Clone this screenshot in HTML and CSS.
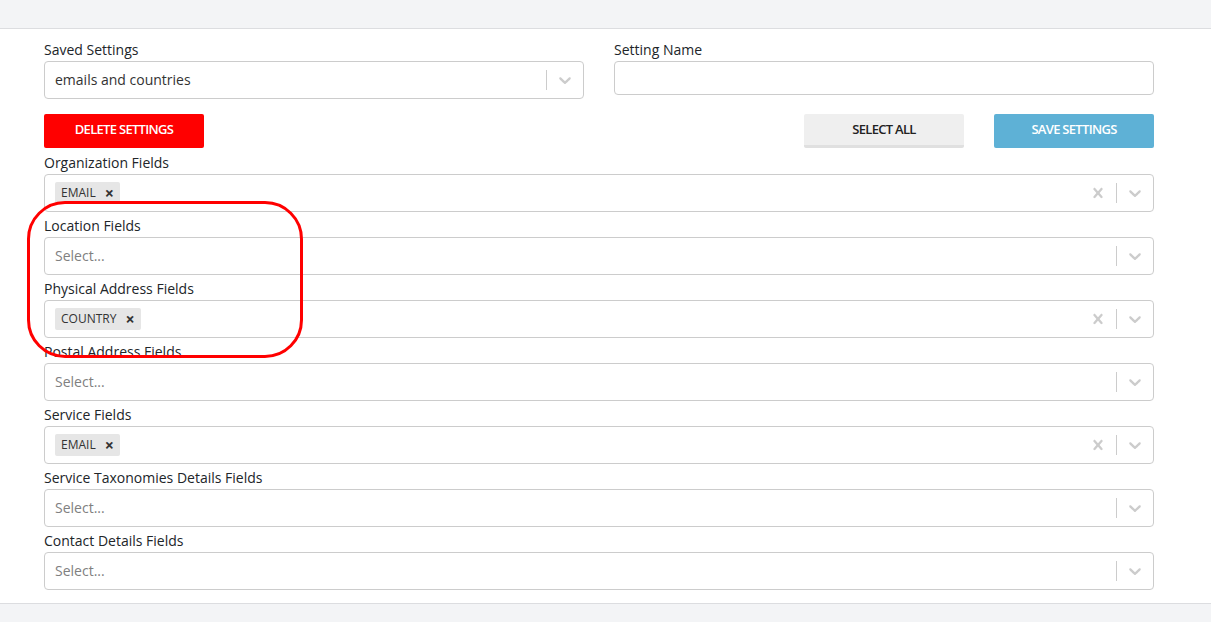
FILE: index.html
```html
<!DOCTYPE html>
<html>
<head>
<meta charset="utf-8">
<link rel="stylesheet" href="styles.css">
</head>
<body>
<div class="topbar"></div>
<main class="panel">
  <div class="row2">
    <div class="field">
      <label class="lbl">Saved Settings</label>
      <div class="select">
        <div class="values"><span class="single">emails and countries</span></div>
        <div class="indicators">
          <span class="sep"></span>
          <span class="ind"><svg viewBox="0 0 20 20" width="20" height="20"><path d="M4.516 7.548c0.436-0.446 1.043-0.481 1.576 0l3.908 3.747 3.908-3.747c0.533-0.481 1.141-0.446 1.574 0 0.436 0.445 0.408 1.197 0 1.615-0.406 0.418-4.695 4.502-4.695 4.502-0.217 0.223-0.502 0.335-0.787 0.335s-0.57-0.112-0.789-0.335c0 0-4.287-4.084-4.695-4.502s-0.436-1.17 0-1.615z"/></svg></span>
        </div>
      </div>
    </div>
    <div class="field">
      <label class="lbl">Setting Name</label>
      <input class="text-input" type="text">
    </div>
  </div>

  <div class="btn-row">
    <button class="btn btn-delete">DELETE SETTINGS</button>
    <div class="btn-right">
      <button class="btn btn-select">SELECT ALL</button>
      <button class="btn btn-save">SAVE SETTINGS</button>
    </div>
  </div>

  <div class="fields">
    <div class="field">
      <label class="lbl">Organization Fields</label>
      <div class="select">
        <div class="values"><span class="chip"><span class="chip-lbl">EMAIL</span><span class="chip-x">×</span></span></div>
        <div class="indicators">
          <span class="ind"><svg viewBox="0 0 20 20" width="20" height="20"><path d="M14.348 14.849c-0.469 0.469-1.229 0.469-1.697 0l-2.651-3.030-2.651 3.029c-0.469 0.469-1.229 0.469-1.697 0-0.469-0.469-0.469-1.229 0-1.697l2.758-3.150-2.759-3.152c-0.469-0.469-0.469-1.228 0-1.697s1.228-0.469 1.697 0l2.652 3.031 2.651-3.031c0.469-0.469 1.228-0.469 1.697 0s0.469 1.229 0 1.697l-2.758 3.152 2.758 3.150c0.469 0.469 0.469 1.229 0 1.698z"/></svg></span>
          <span class="sep"></span>
          <span class="ind"><svg viewBox="0 0 20 20" width="20" height="20"><path d="M4.516 7.548c0.436-0.446 1.043-0.481 1.576 0l3.908 3.747 3.908-3.747c0.533-0.481 1.141-0.446 1.574 0 0.436 0.445 0.408 1.197 0 1.615-0.406 0.418-4.695 4.502-4.695 4.502-0.217 0.223-0.502 0.335-0.787 0.335s-0.57-0.112-0.789-0.335c0 0-4.287-4.084-4.695-4.502s-0.436-1.17 0-1.615z"/></svg></span>
        </div>
      </div>
    </div>
    <div class="field">
      <label class="lbl">Location Fields</label>
      <div class="select">
        <div class="values"><span class="placeholder">Select...</span></div>
        <div class="indicators">
          <span class="sep"></span>
          <span class="ind"><svg viewBox="0 0 20 20" width="20" height="20"><path d="M4.516 7.548c0.436-0.446 1.043-0.481 1.576 0l3.908 3.747 3.908-3.747c0.533-0.481 1.141-0.446 1.574 0 0.436 0.445 0.408 1.197 0 1.615-0.406 0.418-4.695 4.502-4.695 4.502-0.217 0.223-0.502 0.335-0.787 0.335s-0.57-0.112-0.789-0.335c0 0-4.287-4.084-4.695-4.502s-0.436-1.17 0-1.615z"/></svg></span>
        </div>
      </div>
    </div>
    <div class="field">
      <label class="lbl">Physical Address Fields</label>
      <div class="select">
        <div class="values"><span class="chip"><span class="chip-lbl">COUNTRY</span><span class="chip-x">×</span></span></div>
        <div class="indicators">
          <span class="ind"><svg viewBox="0 0 20 20" width="20" height="20"><path d="M14.348 14.849c-0.469 0.469-1.229 0.469-1.697 0l-2.651-3.030-2.651 3.029c-0.469 0.469-1.229 0.469-1.697 0-0.469-0.469-0.469-1.229 0-1.697l2.758-3.150-2.759-3.152c-0.469-0.469-0.469-1.228 0-1.697s1.228-0.469 1.697 0l2.652 3.031 2.651-3.031c0.469-0.469 1.228-0.469 1.697 0s0.469 1.229 0 1.697l-2.758 3.152 2.758 3.150c0.469 0.469 0.469 1.229 0 1.698z"/></svg></span>
          <span class="sep"></span>
          <span class="ind"><svg viewBox="0 0 20 20" width="20" height="20"><path d="M4.516 7.548c0.436-0.446 1.043-0.481 1.576 0l3.908 3.747 3.908-3.747c0.533-0.481 1.141-0.446 1.574 0 0.436 0.445 0.408 1.197 0 1.615-0.406 0.418-4.695 4.502-4.695 4.502-0.217 0.223-0.502 0.335-0.787 0.335s-0.57-0.112-0.789-0.335c0 0-4.287-4.084-4.695-4.502s-0.436-1.17 0-1.615z"/></svg></span>
        </div>
      </div>
    </div>
    <div class="field">
      <label class="lbl">Postal Address Fields</label>
      <div class="select">
        <div class="values"><span class="placeholder">Select...</span></div>
        <div class="indicators">
          <span class="sep"></span>
          <span class="ind"><svg viewBox="0 0 20 20" width="20" height="20"><path d="M4.516 7.548c0.436-0.446 1.043-0.481 1.576 0l3.908 3.747 3.908-3.747c0.533-0.481 1.141-0.446 1.574 0 0.436 0.445 0.408 1.197 0 1.615-0.406 0.418-4.695 4.502-4.695 4.502-0.217 0.223-0.502 0.335-0.787 0.335s-0.57-0.112-0.789-0.335c0 0-4.287-4.084-4.695-4.502s-0.436-1.17 0-1.615z"/></svg></span>
        </div>
      </div>
    </div>
    <div class="field">
      <label class="lbl">Service Fields</label>
      <div class="select">
        <div class="values"><span class="chip"><span class="chip-lbl">EMAIL</span><span class="chip-x">×</span></span></div>
        <div class="indicators">
          <span class="ind"><svg viewBox="0 0 20 20" width="20" height="20"><path d="M14.348 14.849c-0.469 0.469-1.229 0.469-1.697 0l-2.651-3.030-2.651 3.029c-0.469 0.469-1.229 0.469-1.697 0-0.469-0.469-0.469-1.229 0-1.697l2.758-3.150-2.759-3.152c-0.469-0.469-0.469-1.228 0-1.697s1.228-0.469 1.697 0l2.652 3.031 2.651-3.031c0.469-0.469 1.228-0.469 1.697 0s0.469 1.229 0 1.697l-2.758 3.152 2.758 3.150c0.469 0.469 0.469 1.229 0 1.698z"/></svg></span>
          <span class="sep"></span>
          <span class="ind"><svg viewBox="0 0 20 20" width="20" height="20"><path d="M4.516 7.548c0.436-0.446 1.043-0.481 1.576 0l3.908 3.747 3.908-3.747c0.533-0.481 1.141-0.446 1.574 0 0.436 0.445 0.408 1.197 0 1.615-0.406 0.418-4.695 4.502-4.695 4.502-0.217 0.223-0.502 0.335-0.787 0.335s-0.57-0.112-0.789-0.335c0 0-4.287-4.084-4.695-4.502s-0.436-1.17 0-1.615z"/></svg></span>
        </div>
      </div>
    </div>
    <div class="field">
      <label class="lbl">Service Taxonomies Details Fields</label>
      <div class="select">
        <div class="values"><span class="placeholder">Select...</span></div>
        <div class="indicators">
          <span class="sep"></span>
          <span class="ind"><svg viewBox="0 0 20 20" width="20" height="20"><path d="M4.516 7.548c0.436-0.446 1.043-0.481 1.576 0l3.908 3.747 3.908-3.747c0.533-0.481 1.141-0.446 1.574 0 0.436 0.445 0.408 1.197 0 1.615-0.406 0.418-4.695 4.502-4.695 4.502-0.217 0.223-0.502 0.335-0.787 0.335s-0.57-0.112-0.789-0.335c0 0-4.287-4.084-4.695-4.502s-0.436-1.17 0-1.615z"/></svg></span>
        </div>
      </div>
    </div>
    <div class="field">
      <label class="lbl">Contact Details Fields</label>
      <div class="select">
        <div class="values"><span class="placeholder">Select...</span></div>
        <div class="indicators">
          <span class="sep"></span>
          <span class="ind"><svg viewBox="0 0 20 20" width="20" height="20"><path d="M4.516 7.548c0.436-0.446 1.043-0.481 1.576 0l3.908 3.747 3.908-3.747c0.533-0.481 1.141-0.446 1.574 0 0.436 0.445 0.408 1.197 0 1.615-0.406 0.418-4.695 4.502-4.695 4.502-0.217 0.223-0.502 0.335-0.787 0.335s-0.57-0.112-0.789-0.335c0 0-4.287-4.084-4.695-4.502s-0.436-1.17 0-1.615z"/></svg></span>
        </div>
      </div>
    </div>
  </div>
  <div class="highlight"></div>
</main>
<div class="footer"></div>
</body>
</html>
```

FILE: styles.css
```css
* { box-sizing: border-box; }
html, body { margin: 0; padding: 0; }
body {
  background: #f3f4f6;
  font-family: "Open Sans", "Liberation Sans", sans-serif;
  font-size: 14px;
  color: #212529;
  height: 622px;
  overflow: hidden;
}
.topbar {
  height: 29px;
  background: #f3f4f6;
  border-bottom: 1px solid #dcdde0;
}
.panel {
  position: relative;
  background: #fff;
  padding: 11px 57px 13px 44px;
  border-bottom: 1px solid #dcdde0;
}
.row2 {
  display: grid;
  grid-template-columns: 1fr 1fr;
  column-gap: 30px;
  align-items: start;
}
.lbl {
  display: block;
  line-height: 20px;
  margin-bottom: 1px;
  color: #212529;
}
.fields { padding-top: 1px; }
.fields .field { margin-top: 4px; }
.select {
  display: flex;
  align-items: center;
  height: 38px;
  border: 1px solid #ccc;
  border-radius: 4px;
  background: #fff;
}
.values {
  flex: 1;
  display: flex;
  align-items: center;
  padding: 2px 8px;
  min-width: 0;
}
.single, .placeholder { margin: 0 2px; line-height: 20px; }
.single { color: #333; }
.placeholder { color: #808080; }
.chip {
  display: inline-flex;
  align-items: center;
  background: #e6e6e6;
  border-radius: 2px;
  margin: 2px;
  height: 22px;
}
.chip-lbl {
  font-size: 12px;
  color: #333;
  padding: 3px 4px 3px 6px;
  line-height: 16px;
}
.chip-x {
  padding: 0 6px 0 5px;
  font-size: 16px;
  font-weight: 700;
  color: #333;
  line-height: 16px;
}
.indicators {
  display: flex;
  align-items: stretch;
  align-self: stretch;
}
.sep {
  width: 1px;
  background: #ccc;
  margin: 8px 0;
}
.ind {
  display: flex;
  align-items: center;
  padding: 8px;
}
.ind svg { fill: #ccc; display: block; }
.text-input {
  display: block;
  width: 100%;
  height: 34px;
  border: 1px solid #ccc;
  border-radius: 4px;
  font: inherit;
  padding: 6px 12px;
  outline: none;
}
.btn-row {
  display: flex;
  justify-content: space-between;
  margin-top: 15px;
}
.btn-right { display: flex; gap: 30px; }
.btn {
  width: 160px;
  height: 34px;
  border: 0;
  border-radius: 2px;
  font-family: "Open Sans", "Liberation Sans", sans-serif;
  font-size: 13px;
  font-weight: 600;
  letter-spacing: -0.7px;
  line-height: 18px;
  cursor: pointer;
  padding: 0 0 5px 0;
}
.btn-delete { background: #ff0000; color: #fff; }
.btn-select {
  background: #efefef;
  color: #222;
  border-bottom: 3px solid #e0e0e0;
  padding-bottom: 2px;
}
.btn-save { background: #5eb1d6; color: #fff; }
.highlight {
  position: absolute;
  left: 27px;
  top: 172px;
  width: 276px;
  height: 157px;
  border: 3px solid #ff0000;
  border-radius: 38px;
  pointer-events: none;
}
.footer { height: 20px; background: #f3f4f6; }
```
